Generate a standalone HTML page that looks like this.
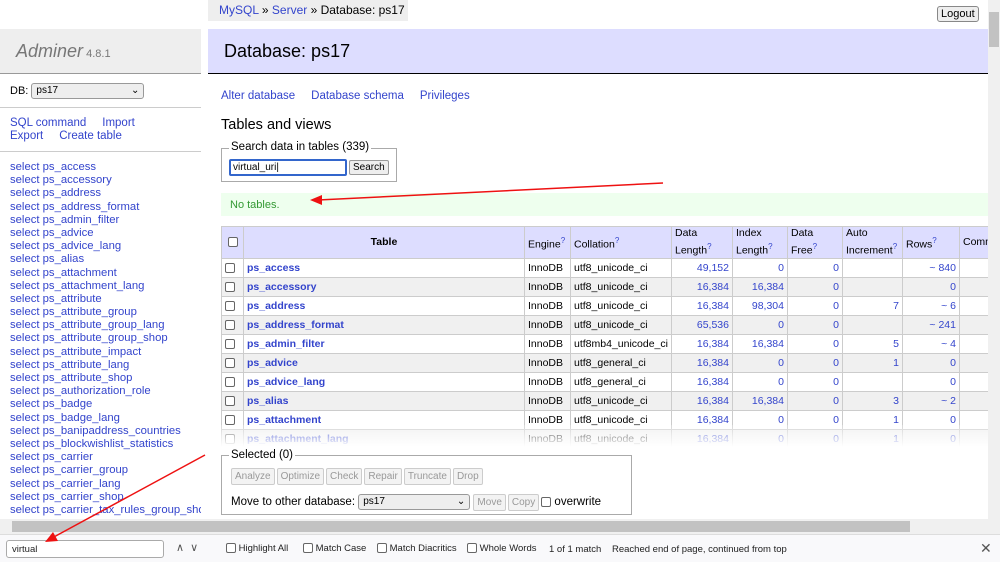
<!DOCTYPE html>
<html><head><meta charset="utf-8"><style>
*{box-sizing:border-box;margin:0;padding:0}
body{width:1000px;height:562px;overflow:hidden;position:relative;font-family:"Liberation Sans",sans-serif;font-size:11px;background:#fff;color:#000}
a{color:#34c;text-decoration:none}
.abs{position:absolute}
.side a{display:block;height:13.2px;line-height:13px;font-size:11.3px;white-space:nowrap}
table{border-collapse:collapse;position:absolute;left:221px;top:226px;font-size:10.5px}
td,th{border:1px solid #ccc;height:19px;padding:0 3px;white-space:nowrap}
th{background:#ddf;font-weight:normal;text-align:left;height:29px;line-height:13px}
td.n{text-align:right;color:#34c}
td.t a{font-weight:bold}
tr:nth-child(odd) td{background:#f0f0f0}
sup{color:#34c;font-size:8px}
.cb{display:inline-block;width:10px;height:10px;border:1px solid #666;border-radius:2px;background:#fff;vertical-align:middle}
.btn{display:inline-block;border:1px solid #ccc;background:#f3f3f3;color:#999;border-radius:2px;padding:2px 3px;font-size:10px;margin-right:2px}
</style></head><body>
<div class="abs" style="left:208px;top:0;width:200px;height:21px;background:#eee;padding:3px 11px;font-size:12px;white-space:nowrap"><a>MySQL</a> » <a>Server</a> » Database: ps17</div>
<div class="abs" style="left:937px;top:6px;border:1px solid #888;border-radius:3px;background:#eee;font-size:11px;padding:1px 3px">Logout</div>
<div class="abs" style="left:0;top:29px;width:201px;height:45px;background:#eee;border-bottom:1px solid #999;padding:12px 16px;color:#777"><i style="font-size:18px">Adminer</i> <span style="font-size:11px">4.8.1</span></div>
<div class="abs" style="left:10px;top:83px;font-size:11px">DB: <span style="display:inline-block;width:113px;height:16px;border:1px solid #999;border-radius:3px;background:#eee;vertical-align:middle;padding-left:4px;font-size:10px;line-height:14px">ps17<span style="float:right;margin-right:4px">⌄</span></span></div>
<div class="abs" style="left:0;top:107px;width:201px;border-top:1px solid #ccc"></div>
<div class="abs" style="left:10px;top:117px;font-size:11.5px;line-height:13px"><a>SQL command</a> &nbsp;&nbsp;&nbsp; <a>Import</a><br><a>Export</a> &nbsp;&nbsp;&nbsp; <a>Create table</a></div>
<div class="abs" style="left:0;top:151px;width:201px;border-top:1px solid #ccc"></div>
<div class="abs side" style="left:10px;top:161px;width:191px;overflow:hidden">
<a>select ps_access</a><a>select ps_accessory</a><a>select ps_address</a><a>select ps_address_format</a><a>select ps_admin_filter</a><a>select ps_advice</a><a>select ps_advice_lang</a><a>select ps_alias</a><a>select ps_attachment</a><a>select ps_attachment_lang</a><a>select ps_attribute</a><a>select ps_attribute_group</a><a>select ps_attribute_group_lang</a><a>select ps_attribute_group_shop</a><a>select ps_attribute_impact</a><a>select ps_attribute_lang</a><a>select ps_attribute_shop</a><a>select ps_authorization_role</a><a>select ps_badge</a><a>select ps_badge_lang</a><a>select ps_banipaddress_countries</a><a>select ps_blockwishlist_statistics</a><a>select ps_carrier</a><a>select ps_carrier_group</a><a>select ps_carrier_lang</a><a>select ps_carrier_shop</a><a>select ps_carrier_tax_rules_group_shop</a></div>
<div class="abs" style="left:208px;top:29px;width:780px;height:45px;background:#ddf;border-bottom:1px solid #000;padding:12px 16px;font-size:18px">Database: ps17</div>
<div class="abs" style="left:221px;top:90px;font-size:11.5px"><a>Alter database</a> &nbsp;&nbsp;&nbsp; <a>Database schema</a> &nbsp;&nbsp;&nbsp; <a>Privileges</a></div>
<div class="abs" style="left:221px;top:117px;font-size:14.5px">Tables and views</div>
<div class="abs" style="left:221px;top:148px;width:176px;height:34px;border:1px solid #aaa"></div>
<div class="abs" style="left:229px;top:141px;background:#fff;padding:0 2px;font-size:11.5px">Search data in tables (339)</div>
<div class="abs" style="left:229px;top:159px;width:118px;height:17px;border:2px solid #36c;border-radius:2px;font-size:10px;padding-left:2px;line-height:13px">virtual_uri|</div>
<div class="abs" style="left:349px;top:160px;border:1px solid #999;border-radius:2px;background:#eee;font-size:10px;padding:1px 3px">Search</div>
<div class="abs" style="left:221px;top:193px;width:767px;height:23px;background:#efe;color:#393;padding:6px 9px;font-size:11px">No tables.</div>
<table>
<tr><th style="width:22px;text-align:center"><span class="cb"></span></th><th style="width:281px;text-align:center;font-weight:bold">Table</th><th style="width:46px">Engine<sup>?</sup></th><th style="width:101px">Collation<sup>?</sup></th><th style="width:61px">Data<br>Length<sup>?</sup></th><th style="width:55px">Index<br>Length<sup>?</sup></th><th style="width:55px">Data<br>Free<sup>?</sup></th><th style="width:60px">Auto<br>Increment<sup>?</sup></th><th style="width:57px">Rows<sup>?</sup></th><th style="width:40px">Comm</th></tr>
<tr><td><span class="cb"></span></td><td class="t"><a>ps_access</a></td><td>InnoDB</td><td>utf8_unicode_ci</td><td class="n">49,152</td><td class="n">0</td><td class="n">0</td><td class="n"></td><td class="n">~ 840</td><td></td></tr>
<tr><td><span class="cb"></span></td><td class="t"><a>ps_accessory</a></td><td>InnoDB</td><td>utf8_unicode_ci</td><td class="n">16,384</td><td class="n">16,384</td><td class="n">0</td><td class="n"></td><td class="n">0</td><td></td></tr>
<tr><td><span class="cb"></span></td><td class="t"><a>ps_address</a></td><td>InnoDB</td><td>utf8_unicode_ci</td><td class="n">16,384</td><td class="n">98,304</td><td class="n">0</td><td class="n">7</td><td class="n">~ 6</td><td></td></tr>
<tr><td><span class="cb"></span></td><td class="t"><a>ps_address_format</a></td><td>InnoDB</td><td>utf8_unicode_ci</td><td class="n">65,536</td><td class="n">0</td><td class="n">0</td><td class="n"></td><td class="n">~ 241</td><td></td></tr>
<tr><td><span class="cb"></span></td><td class="t"><a>ps_admin_filter</a></td><td>InnoDB</td><td>utf8mb4_unicode_ci</td><td class="n">16,384</td><td class="n">16,384</td><td class="n">0</td><td class="n">5</td><td class="n">~ 4</td><td></td></tr>
<tr><td><span class="cb"></span></td><td class="t"><a>ps_advice</a></td><td>InnoDB</td><td>utf8_general_ci</td><td class="n">16,384</td><td class="n">0</td><td class="n">0</td><td class="n">1</td><td class="n">0</td><td></td></tr>
<tr><td><span class="cb"></span></td><td class="t"><a>ps_advice_lang</a></td><td>InnoDB</td><td>utf8_general_ci</td><td class="n">16,384</td><td class="n">0</td><td class="n">0</td><td class="n"></td><td class="n">0</td><td></td></tr>
<tr><td><span class="cb"></span></td><td class="t"><a>ps_alias</a></td><td>InnoDB</td><td>utf8_unicode_ci</td><td class="n">16,384</td><td class="n">16,384</td><td class="n">0</td><td class="n">3</td><td class="n">~ 2</td><td></td></tr>
<tr><td><span class="cb"></span></td><td class="t"><a>ps_attachment</a></td><td>InnoDB</td><td>utf8_unicode_ci</td><td class="n">16,384</td><td class="n">0</td><td class="n">0</td><td class="n">1</td><td class="n">0</td><td></td></tr>
<tr><td><span class="cb"></span></td><td class="t"><a>ps_attachment_lang</a></td><td>InnoDB</td><td>utf8_unicode_ci</td><td class="n">16,384</td><td class="n">0</td><td class="n">0</td><td class="n">1</td><td class="n">0</td><td></td></tr>
</table>
<div class="abs" style="left:210px;top:425px;width:778px;height:22px;background:linear-gradient(rgba(255,255,255,0.2),#fff)"></div>
<div class="abs" style="left:210px;top:447px;width:778px;height:72px;background:#fff"></div>
<div class="abs" style="left:221px;top:455px;width:411px;height:60px;border:1px solid #aaa"></div>
<div class="abs" style="left:229px;top:449px;background:#fff;padding:0 2px;font-size:11.5px">Selected (0)</div>
<div class="abs" style="left:231px;top:468px"><span class="btn">Analyze</span><span class="btn">Optimize</span><span class="btn">Check</span><span class="btn">Repair</span><span class="btn">Truncate</span><span class="btn">Drop</span></div>
<div class="abs" style="left:231px;top:494px;font-size:11.5px">Move to other database: <span style="display:inline-block;width:112px;height:16px;border:1px solid #999;border-radius:3px;background:#eee;vertical-align:middle;font-size:10px;padding-left:4px;line-height:14px">ps17<span style="float:right;margin-right:4px">⌄</span></span> <span class="btn">Move</span><span class="btn">Copy</span><span class="cb"></span> overwrite</div>
<div class="abs" style="left:988px;top:0;width:12px;height:519px;background:#f0f0f0"></div>
<div class="abs" style="left:989px;top:12px;width:10px;height:35px;background:#c2c2c2"></div>
<div class="abs" style="left:0;top:519px;width:1000px;height:15px;background:#f0f0f0"></div>
<div class="abs" style="left:12px;top:521px;width:898px;height:11px;background:#c2c2c2"></div>
<div class="abs" style="left:0;top:534px;width:1000px;height:28px;background:#f9f9fb;border-top:1px solid #ddd;font-size:9.5px;color:#222">
<div class="abs" style="left:6px;top:5px;width:158px;height:18px;border:1px solid #aaa;border-radius:3px;background:#fff;padding:3px 5px">virtual</div>
<div class="abs" style="left:176px;top:6px;font-size:11px;color:#555">∧ &nbsp;∨</div>
<div class="abs" style="left:226px;top:8px"><span class="cb"></span> Highlight All</div>
<div class="abs" style="left:303px;top:8px"><span class="cb"></span> Match Case</div>
<div class="abs" style="left:377px;top:8px"><span class="cb"></span> Match Diacritics</div>
<div class="abs" style="left:467px;top:8px"><span class="cb"></span> Whole Words</div>
<div class="abs" style="left:549px;top:9px">1 of 1 match</div>
<div class="abs" style="left:612px;top:9px">Reached end of page, continued from top</div>
<div class="abs" style="left:980px;top:5px;font-size:14px;color:#555">✕</div>
</div>
<svg class="abs" style="left:0;top:0" width="1000" height="562"><line x1="663" y1="183" x2="318" y2="200" stroke="#e11" stroke-width="1.5"/><polygon points="310,200 322,195 322,205" fill="#e11"/><line x1="205" y1="455" x2="52" y2="538" stroke="#e11" stroke-width="1.5"/><polygon points="45,542 53,532 58,541" fill="#e11"/></svg>
</body></html>
